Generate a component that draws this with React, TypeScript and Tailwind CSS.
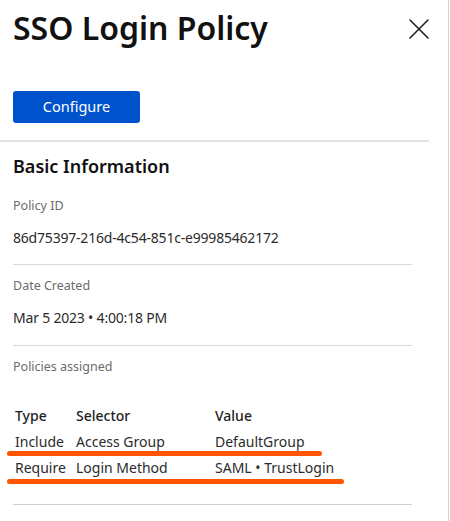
const rows = [
  { type: 'Include', selector: 'Access Group', value: 'DefaultGroup', line: 'w-[315px] top-[22px]' },
  { type: 'Require', selector: 'Login Method', value: 'SAML • TrustLogin', line: 'w-[337px] top-[24px]' },
]

function Field({ label, value, className }: { label: string; value: string; className: string }) {
  return (
    <div className={`border-b border-[#d9d9d9] ${className}`}>
      <p className="text-[12.5px] leading-[18px] text-[#6b6b6b]">{label}</p>
      <p className="mt-[13px] text-[14px] leading-[20px] text-[#2b2b2b] tracking-[-0.2px]">{value}</p>
    </div>
  )
}

export default function App() {
  return (
    <div className="w-[449px] h-[521px] overflow-hidden border-r border-[#d4d4d4] bg-white font-['Noto_Sans',sans-serif]">
      <div className="flex items-start justify-between pl-[13px] pr-[19px] pt-[7px]">
        <h1 className="text-[32px] leading-[42px] font-semibold text-[#111]">SSO Login Policy</h1>
        <svg className="mt-[12px]" width="20" height="20" viewBox="0 0 20 20" fill="none" stroke="#1f1f1f" strokeWidth="1.6" strokeLinecap="round">
          <path d="M1 1L19 19M19 1L1 19" />
        </svg>
      </div>

      <div className="pl-[13px] pt-[42px]">
        <button className="h-[32px] w-[127px] rounded-[3px] bg-[#0052cc] text-[14.5px] text-white">
          Configure
        </button>
      </div>

      <div className="mt-[17px] h-[2px] w-[429px] bg-[#e4e4e4]" />

      <div className="w-[429px] pl-[13px] pr-[17px]">
        <h2 className="pt-[12px] text-[18px] leading-[24px] font-semibold text-[#111]">Basic Information</h2>
        <Field label="Policy ID" value="86d75397-216d-4c54-851c-e99985462172" className="pt-[19px] pb-[16px]" />
        <Field label="Date Created" value="Mar 5 2023 • 4:00:18 PM" className="pt-[12px] pb-[17px]" />

        <div className="border-b border-[#cfcfcf] pb-[23px]">
          <p className="pt-[12px] text-[12.5px] leading-[18px] text-[#6b6b6b]">Policies assigned</p>
          <div className="mt-[27px] text-[14px] leading-[26px] text-[#2b2b2b]">
            <div className="flex font-medium text-[#222]">
              <span className="w-[63px] pl-[2px]">Type</span>
              <span className="w-[139px]">Selector</span>
              <span>Value</span>
            </div>
            {rows.map((r) => (
              <div key={r.type} className="relative flex">
                <span className="w-[63px] pl-[2px]">{r.type}</span>
                <span className="w-[139px]">{r.selector}</span>
                <span>{r.value}</span>
                <span className={`absolute -left-[6px] h-[5px] rounded-full bg-[#ff5500] ${r.line}`} />
              </div>
            ))}
          </div>
        </div>
      </div>
    </div>
  )
}
